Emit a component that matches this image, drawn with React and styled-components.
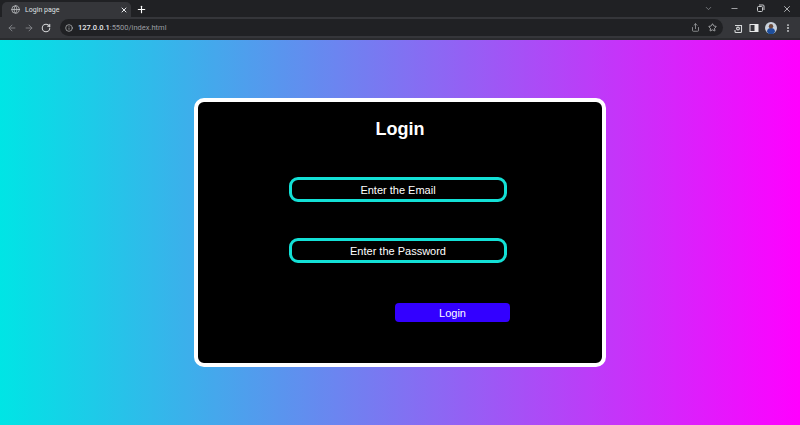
import React from 'react'
import styled, { createGlobalStyle } from 'styled-components'
import { ArrowLeft, ArrowRight, RotateCw, Info, X, Plus, ChevronDown, Minus, Star, Share, MoreVertical, Globe } from 'lucide-react'

const GlobalStyle = createGlobalStyle`
  html, body { margin: 0; padding: 0; height: 100%; overflow: hidden; }
  * { box-sizing: border-box; }
  input::placeholder { color: #fff; opacity: 1; }
`

const App = () => {
  return (
    <Page>
      <GlobalStyle />
      <TabStrip>
        <Tab>
          <Globe size={9} color="#c4c7c9" strokeWidth={2} />
          <TabTitle>Login page</TabTitle>
          <X size={8} color="#e8eaed" strokeWidth={3} />
        </Tab>
        <NewTab><Plus size={11} color="#fff" strokeWidth={2.5} /></NewTab>
        <WindowControls>
          <ChevronDown size={9} color="#8a8d91" />
          <Minus size={9} color="#c8cacc" />
          <RestoreIcon />
          <X size={10} color="#c8cacc" />
        </WindowControls>
      </TabStrip>
      <Toolbar>
        <ArrowLeft size={10} color="#8a8d91" />
        <ArrowRight size={10} color="#8a8d91" />
        <RotateCw size={10} color="#d5d7d9" strokeWidth={2.5} />
        <Omnibox>
          <Info size={8} color="#c4c7c9" />
          <Url><strong>127.0.0.1</strong>:5500/index.html</Url>
          <OmniActions>
            <Share size={9} color="#a4a7aa" />
            <Star size={9} color="#c8cacc" />
          </OmniActions>
        </Omnibox>
        <Extensions>
          <ExtensionIcon />
          <SidePanelIcon />
          <Avatar />
          <MoreVertical size={10} color="#d5d7d9" strokeWidth={2.5} />
        </Extensions>
      </Toolbar>
      <Main>
        <Card>
          <Title>Login</Title>
          <Field type="email" placeholder="Enter the Email" />
          <Field type="password" placeholder="Enter the Password" />
          <ButtonRow>
            <LoginButton>Login</LoginButton>
          </ButtonRow>
        </Card>
      </Main>
    </Page>
  )
}

const RestoreIcon = () => (
  <svg width="9" height="9" viewBox="0 0 9 9" fill="none" stroke="#c8cacc" strokeWidth="1">
    <rect x="1.5" y="2.5" width="5" height="5" rx="1" />
    <path d="M3 1h4a1 1 0 0 1 1 1v4" />
  </svg>
)

const ExtensionIcon = () => (
  <svg width="10" height="10" viewBox="0 0 10 10" fill="none" stroke="#d5d7d9" strokeWidth="1.1">
    <path d="M2 2.5h6.5v6a1 1 0 0 1-1 1H3a1 1 0 0 1-1-1v-1.5" />
    <circle cx="5" cy="5.5" r="1.4" />
  </svg>
)

const SidePanelIcon = () => (
  <svg width="10" height="10" viewBox="0 0 10 10">
    <rect x="1" y="1.5" width="8" height="7" fill="none" stroke="#e6e7e8" strokeWidth="1" />
    <rect x="5.5" y="1.5" width="3.5" height="7" fill="#e6e7e8" />
  </svg>
)

const Avatar = () => (
  <svg width="12" height="12" viewBox="0 0 12 12">
    <circle cx="6" cy="6" r="6" fill="#c9d2dc" />
    <path d="M2 10a4 4 0 0 1 8 0l-2 2H4z" fill="#1f4f9c" />
    <circle cx="6" cy="4.2" r="2.2" fill="#6a4a3a" />
  </svg>
)

// whole window
const Page = styled.div`
  width: 800px;
  height: 425px;
  display: flex;
  flex-direction: column;
  font-family: "Liberation Sans", Arial, sans-serif;
`

// row with the tabs and window buttons
const TabStrip = styled.div`
  height: 17px;
  background-color: #202124;
  display: flex;
  align-items: flex-end;
  padding-left: 2px;
`

const Tab = styled.div`
  width: 129px;
  height: 15px;
  background-color: #35363a;
  border-radius: 5px 5px 0 0;
  display: flex;
  align-items: center;
  padding: 0 3px 0 9px;
  gap: 4px;
`

const TabTitle = styled.span`
  flex: 1;
  font-family: "Roboto", sans-serif;
  font-size: 7px;
  color: #dfe1e3;
  padding-left: 1px;
`

const NewTab = styled.div`
  width: 18px;
  height: 15px;
  margin-left: 1px;
  display: flex;
  align-items: center;
  justify-content: center;
`

const WindowControls = styled.div`
  margin-left: auto;
  height: 17px;
  align-self: flex-start;
  display: flex;
  align-items: center;
  gap: 17px;
  padding-right: 8px;
`

// back, forward, address bar and extensions
const Toolbar = styled.div`
  height: 23px;
  background-color: #35363a;
  border-bottom: 2px solid #2a2b2e;
  display: flex;
  align-items: center;
  padding: 0 7px;
  gap: 7px;
`

const Omnibox = styled.div`
  flex: 1;
  height: 17px;
  margin-left: 2px;
  background-color: #202124;
  border-radius: 9px;
  display: flex;
  align-items: center;
  padding: 0 6px 0 5px;
  gap: 5px;
`

const Url = styled.span`
  font-family: "Roboto", sans-serif;
  font-size: 7.5px;
  color: #9a9da1;

  strong {
    font-weight: 500;
    color: #e8eaed;
  }
`

const OmniActions = styled.div`
  margin-left: auto;
  display: flex;
  align-items: center;
  gap: 8px;
`

const Extensions = styled.div`
  display: flex;
  align-items: center;
  gap: 6px;
  padding-left: 3px;
`

// gradient area that centres the card
const Main = styled.main`
  flex: 1;
  background: linear-gradient(to right, #00e5e5, #ff00ff);
  display: flex;
  align-items: center;
  justify-content: center;
`

const Card = styled.form`
  width: 412px;
  height: 269px;
  background-color: #000;
  border: 4px solid #fff;
  border-radius: 10px;
  display: flex;
  flex-direction: column;
  align-items: center;
  padding-top: 17px;
`

const Title = styled.h1`
  margin: 0;
  font-size: 18px;
  line-height: 21px;
  font-weight: 700;
  color: #fff;
`

const Field = styled.input`
  width: 218px;
  height: 25px;
  margin-top: 37px;
  margin-right: 4px;
  background-color: #000;
  border: 3px solid #13e0d6;
  border-radius: 9px;
  outline: none;
  font-family: "Liberation Sans", Arial, sans-serif;
  font-size: 11px;
  color: #fff;
  text-align: center;

  & + & {
    margin-top: 36px;
  }
`

const ButtonRow = styled.div`
  width: 100%;
  display: flex;
  justify-content: flex-end;
  padding-right: 92px;
  margin-top: 40px;
`

const LoginButton = styled.button`
  width: 115px;
  height: 19px;
  background-color: #3300ff;
  border: none;
  border-radius: 4px;
  padding: 0;
  font-family: "Liberation Sans", Arial, sans-serif;
  font-size: 11px;
  color: #fff;
`

export default App
